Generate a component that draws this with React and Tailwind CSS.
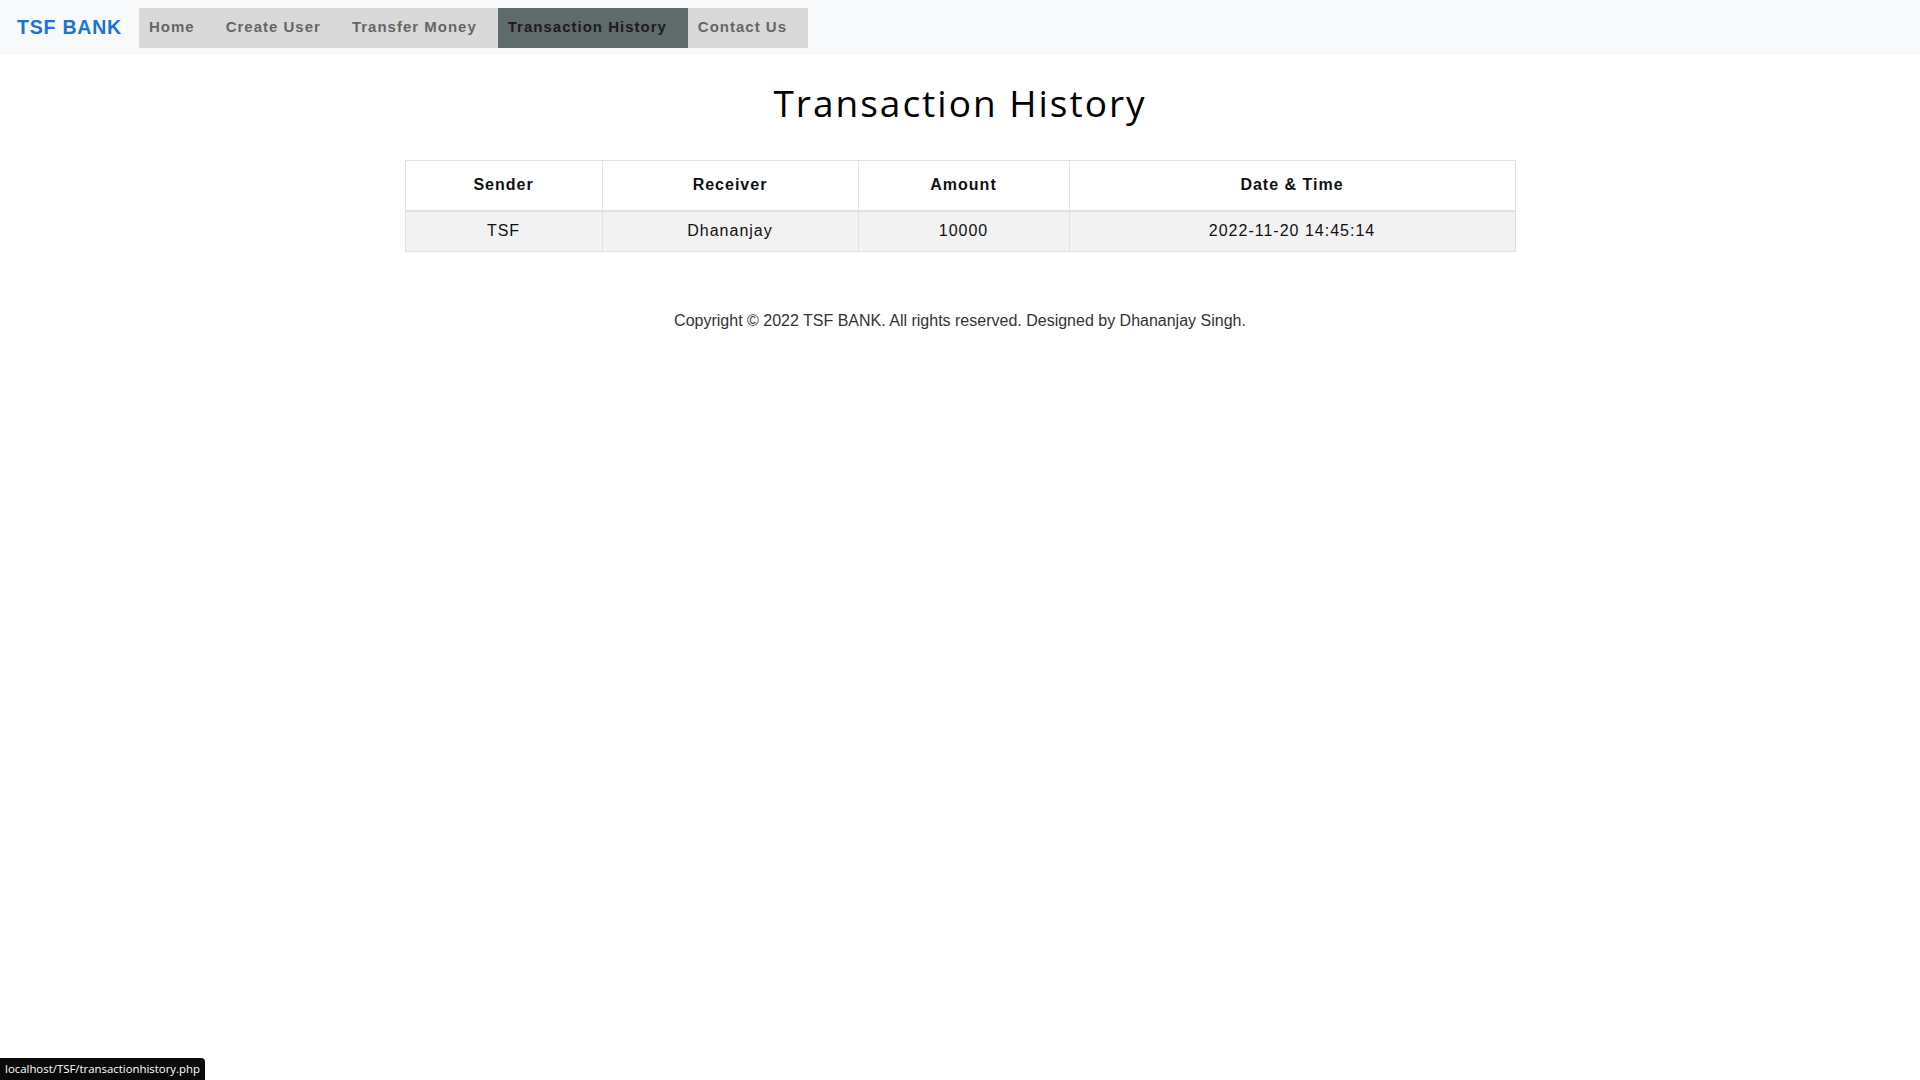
const menu = ['Home', 'Create User', 'Transfer Money', 'Transaction History', 'Contact Us'];

const transactions = [
    { sender: 'TSF', receiver: 'Dhananjay', amount: 10000, datetime: '2022-11-20 14:45:14' },
];

function Navbar() {
    return (
        <nav className="flex items-center h-[55px] bg-[#f8f9fa] pl-[17px]">
            <span className="font-['Liberation_Sans',Arial,sans-serif] font-bold text-[19.5px] text-[#1b74d0] tracking-[0.8px] mr-[17px]">
                TSF BANK
            </span>
            <ul className="flex h-10 bg-[#d9d9d9]">
                {menu.map((item) => (
                    <li
                        key={item}
                        className={
                            item === 'Transaction History'
                                ? 'flex items-center pl-[10px] pr-[21px] bg-[#5f6a6a] text-[#1c1c1c]'
                                : 'flex items-center pl-[10px] pr-[21px] text-[#666666]'
                        }
                    >
                        <a className="font-['Liberation_Sans',Arial,sans-serif] font-bold text-[15px] tracking-[1px]">
                            {item}
                        </a>
                    </li>
                ))}
            </ul>
        </nav>
    );
}

function App() {
    return (
        <div className="relative min-h-[1080px] bg-white">
            <Navbar />
            <div className="flex flex-col items-center">
                <h1 className="mt-[26px] font-['Open_Sans',sans-serif] text-[37px] leading-[44px] tracking-[2px] text-black">
                    Transaction History
                </h1>
                <table className="mt-[35px] w-[1110px] table-fixed border-collapse font-['Liberation_Sans',Arial,sans-serif] text-[16px] tracking-[1px] text-[#111]">
                    <colgroup>
                        <col className="w-[197px]" />
                        <col className="w-[256px]" />
                        <col className="w-[211px]" />
                        <col className="w-[446px]" />
                    </colgroup>
                    <thead>
                        <tr>
                            {['Sender', 'Receiver', 'Amount', 'Date & Time'].map((h) => (
                                <th
                                    key={h}
                                    className="h-[50px] p-0 border border-[#dee2e6] border-b-2 font-bold text-center align-middle"
                                >
                                    {h}
                                </th>
                            ))}
                        </tr>
                    </thead>
                    <tbody>
                        {transactions.map((t, index) => (
                            <tr key={index} className="bg-[#f2f2f2]">
                                <td className="h-[41px] p-0 border border-[#dee2e6] text-center">{t.sender}</td>
                                <td className="h-[41px] p-0 border border-[#dee2e6] text-center">{t.receiver}</td>
                                <td className="h-[41px] p-0 border border-[#dee2e6] text-center">{t.amount}</td>
                                <td className="h-[41px] p-0 border border-[#dee2e6] text-center">{t.datetime}</td>
                            </tr>
                        ))}
                    </tbody>
                </table>
                <footer className="mt-[57px] font-['Liberation_Sans',Arial,sans-serif] text-[16px] leading-6 text-[#333]">
                    Copyright © 2022 TSF BANK. All rights reserved. Designed by Dhananjay Singh.
                </footer>
            </div>
            <div className="absolute left-0 bottom-0 h-[22px] px-[5px] flex items-center bg-[#0a0a0a] rounded-tr-[4px] font-['Open_Sans',sans-serif] text-[11.4px] text-white">
                localhost/TSF/transactionhistory.php
            </div>
        </div>
    );
}

export default App;
